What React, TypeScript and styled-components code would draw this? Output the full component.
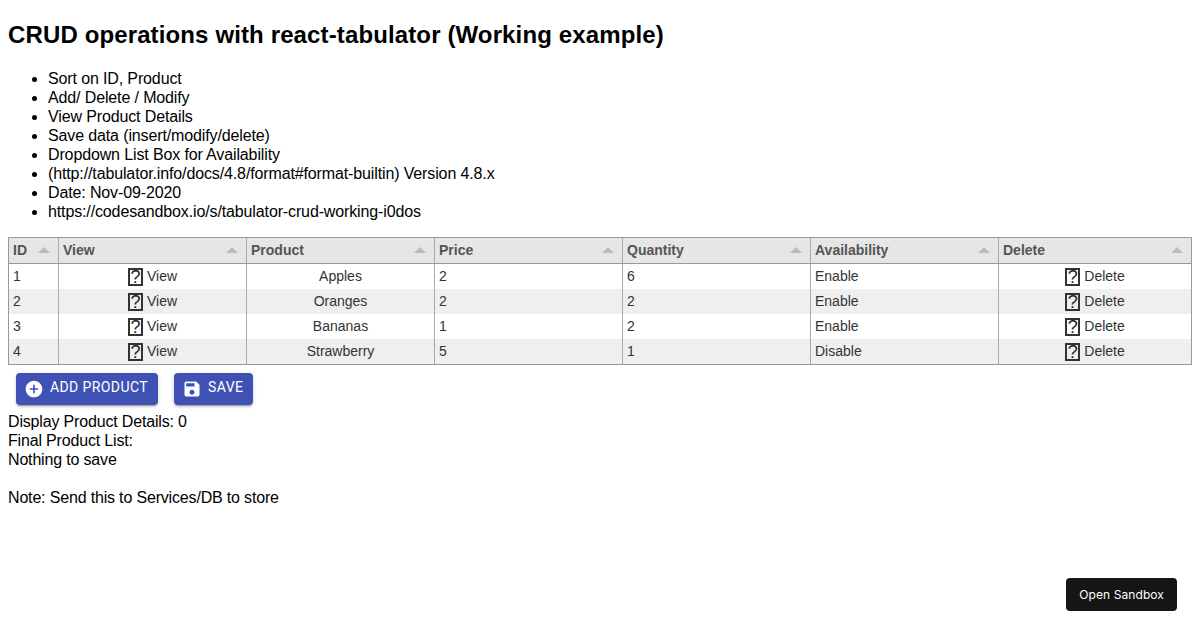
import React from "react";
import styled, { createGlobalStyle } from "styled-components";

const GlobalStyle = createGlobalStyle`
  body {
    margin: 8px;
    font-family: "Liberation Sans", Arial, sans-serif;
    font-size: 16px;
    color: #000;
    background: #fff;
  }
`;

const Title = styled.h1`
  font-size: 24px;
  font-weight: bold;
  letter-spacing: 0.127px;
  margin: 13px 0 20px;
  line-height: 28px;
`;

const Features = styled.ul`
  margin: 0 0 16px;
  padding-left: 40px;
  line-height: 19px;
  letter-spacing: -0.13px;
`;

const Table = styled.div`
  border: 1px solid #999;
  background: #fff;
  font-size: 14px;
  color: #333;
`;

const HeaderRow = styled.div`
  display: flex;
  height: 25px;
  background: #e6e6e6;
  border-bottom: 1px solid #999;
  color: #555;
  font-weight: bold;
`;

const HeaderCell = styled.div<{ $narrow?: boolean; $last?: boolean }>`
  position: relative;
  box-sizing: border-box;
  width: ${(p) => (p.$narrow ? "50px" : "188px")};
  flex: ${(p) => (p.$last ? "1" : "none")};
  padding: 4px;
  line-height: 17px;
  border-right: ${(p) => (p.$last ? "none" : "1px solid #aaa")};
`;

const SortArrow = styled.span`
  position: absolute;
  right: 8px;
  top: 9px;
  width: 0;
  height: 0;
  border-left: 6px solid transparent;
  border-right: 6px solid transparent;
  border-bottom: 6px solid #bbb;
`;

const Row = styled.div<{ $even?: boolean }>`
  display: flex;
  height: 25px;
  background: ${(p) => (p.$even ? "#efefef" : "#fff")};
`;

const Cell = styled.div<{ $center?: boolean; $narrow?: boolean; $last?: boolean }>`
  box-sizing: border-box;
  width: ${(p) => (p.$narrow ? "50px" : "188px")};
  flex: ${(p) => (p.$last ? "1" : "none")};
  padding: 4px;
  line-height: 16px;
  text-align: ${(p) => (p.$center ? "center" : "left")};
  border-right: ${(p) => (p.$last ? "none" : "1px solid #aaa")};
  white-space: nowrap;
`;

const MissingIcon = styled.span`
  display: inline-block;
  box-sizing: border-box;
  width: 15px;
  height: 18px;
  margin: -4px 4px -4px 0;
  border: 2px solid #333;
  font-size: 18px;
  line-height: 15px;
  text-align: center;
  vertical-align: -2px;
  color: #222;
`;

const Actions = styled.div`
  display: flex;
  gap: 16px;
  padding: 8px;
`;

const Button = styled.button`
  display: inline-flex;
  align-items: center;
  box-sizing: border-box;
  height: 32px;
  padding: 0 10px 4px 8px;
  border: 0;
  border-radius: 4px;
  background: #3f51b5;
  color: #fff;
  font-family: Roboto, sans-serif;
  font-size: 14px;
  font-weight: 400;
  letter-spacing: 0.4px;
  text-transform: uppercase;
  box-shadow: 0 3px 1px -2px rgba(0, 0, 0, 0.2), 0 2px 2px 0 rgba(0, 0, 0, 0.14), 0 1px 5px 0 rgba(0, 0, 0, 0.12);
  svg {
    width: 20px;
    height: 20px;
    margin-right: 6px;
    fill: currentColor;
    position: relative;
    top: 2px;
  }
`;

const Summary = styled.div`
  margin-top: -1px;
  line-height: 19px;
  letter-spacing: -0.17px;
`;

const OpenSandbox = styled.a`
  position: fixed;
  right: 23px;
  bottom: 19px;
  padding: 0 13px;
  height: 33px;
  line-height: 33px;
  border-radius: 4px;
  background: #151515;
  color: #fff;
  font-family: Inter, sans-serif;
  font-size: 12px;
  letter-spacing: 0.08px;
`;

const features = [
  "Sort on ID, Product",
  "Add/ Delete / Modify",
  "View Product Details",
  "Save data (insert/modify/delete)",
  "Dropdown List Box for Availability",
  "(http://tabulator.info/docs/4.8/format#format-builtin) Version 4.8.x",
  "Date: Nov-09-2020",
  "https://codesandbox.io/s/tabulator-crud-working-i0dos",
];

const columns = ["ID", "View", "Product", "Price", "Quantity", "Availability", "Delete"];

const products = [
  { id: 1, name: "Apples", price: 2, quantity: 6, availability: "Enable" },
  { id: 2, name: "Oranges", price: 2, quantity: 2, availability: "Enable" },
  { id: 3, name: "Bananas", price: 1, quantity: 2, availability: "Enable" },
  { id: 4, name: "Strawberry", price: 5, quantity: 1, availability: "Disable" },
];

export default function App() {
  return (
    <>
      <GlobalStyle />
      <Title>CRUD operations with react-tabulator (Working example)</Title>
      <Features>
        {features.map((f) => (
          <li key={f}>{f}</li>
        ))}
      </Features>
      <Table>
        <HeaderRow>
          {columns.map((c, i) => (
            <HeaderCell key={c} $narrow={i === 0} $last={i === columns.length - 1}>
              {c}
              <SortArrow />
            </HeaderCell>
          ))}
        </HeaderRow>
        {products.map((p, i) => (
          <Row key={p.id} $even={i % 2 === 1}>
            <Cell $narrow>{p.id}</Cell>
            <Cell $center>
              <MissingIcon>?</MissingIcon>View
            </Cell>
            <Cell $center>{p.name}</Cell>
            <Cell>{p.price}</Cell>
            <Cell>{p.quantity}</Cell>
            <Cell>{p.availability}</Cell>
            <Cell $center $last>
              <MissingIcon>?</MissingIcon>Delete
            </Cell>
          </Row>
        ))}
      </Table>
      <Actions>
        <Button>
          <svg viewBox="0 0 24 24">
            <path d="M12 2C6.48 2 2 6.48 2 12s4.48 10 10 10 10-4.48 10-10S17.52 2 12 2zm5 11h-4v4h-2v-4H7v-2h4V7h2v4h4v2z" />
          </svg>
          Add Product
        </Button>
        <Button>
          <svg viewBox="0 0 24 24">
            <path d="M17 3H5c-1.11 0-2 .9-2 2v14c0 1.1.89 2 2 2h14c1.1 0 2-.9 2-2V7l-4-4zm-5 16c-1.66 0-3-1.34-3-3s1.34-3 3-3 3 1.34 3 3-1.34 3-3 3zm3-10H5V5h10v4z" />
          </svg>
          Save
        </Button>
      </Actions>
      <Summary>
        Display Product Details: 0
        <br />
        Final Product List:
        <br />
        Nothing to save
        <br />
        <br />
        Note: Send this to Services/DB to store
      </Summary>
      <OpenSandbox>Open Sandbox</OpenSandbox>
    </>
  );
}
